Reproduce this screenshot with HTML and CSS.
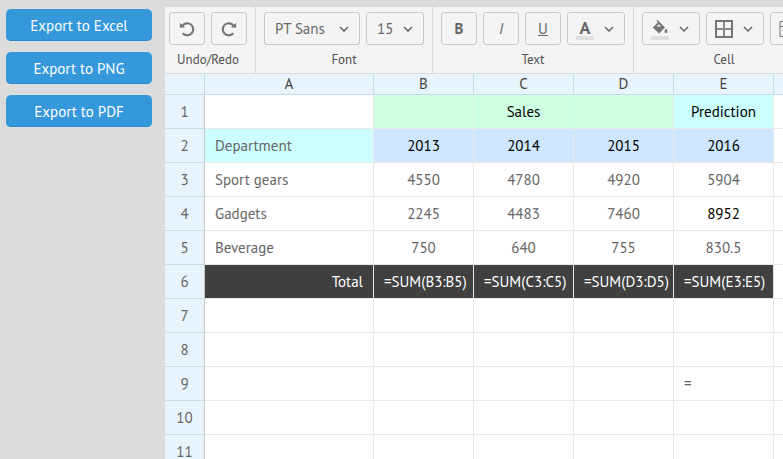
FILE: index.html
```html
<!DOCTYPE html>
<html lang="en">
  <head>
    <meta charset="utf-8" />
    <title>Spreadsheet export</title>
    <link rel="stylesheet" href="styles.css">
  </head>
  <body>
    <svg class="symbols">
      <symbol id="chevron" viewBox="0 0 10 6">
        <path d="M1 1l4 4 4-4" fill="none" stroke="#666" stroke-width="1.5" />
      </symbol>
    </svg>
    <div class="page">
      <aside class="sidebar">
        <button class="export">Export to Excel</button>
        <button class="export">Export to PNG</button>
        <button class="export">Export to PDF</button>
      </aside>
      <main class="sheet">
        <div class="toolbar">
          <div class="group">
            <div class="controls">
              <button class="tool" aria-label="Undo">
                <svg width="16" height="16" viewBox="0 0 16 16">
                  <path d="M3.500 4.600A6 6 0 1 1 3.700 12.200" fill="none" stroke="#757575" stroke-width="2.2" />
                  <path d="M.8 2v4.800l5.400-.5z" fill="#757575" />
                </svg>
              </button>
              <button class="tool" aria-label="Redo">
                <svg width="16" height="16" viewBox="0 0 16 16">
                  <path d="M12.500 4.600A6 6 0 1 0 12.300 12.200" fill="none" stroke="#757575" stroke-width="2.2" />
                  <path d="M15.200 2v4.800l-5.400-.5z" fill="#757575" />
                </svg>
              </button>
            </div>
            <div class="caption">Undo/Redo</div>
          </div>
          <div class="group">
            <div class="controls">
              <div class="picker family">
                <select aria-label="Font family">
                  <option>PT Sans</option>
                </select>
                <svg class="chevron"><use href="#chevron" /></svg>
              </div>
              <div class="picker">
                <select aria-label="Font size">
                  <option>15</option>
                </select>
                <svg class="chevron"><use href="#chevron" /></svg>
              </div>
            </div>
            <div class="caption">Font</div>
          </div>
          <div class="group">
            <div class="controls">
              <button class="tool bold">B</button>
              <button class="tool italic">I</button>
              <button class="tool underline">U</button>
              <button class="tool wide" aria-label="Text color">
                <span class="swatch letter">A</span>
                <svg class="chevron"><use href="#chevron" /></svg>
              </button>
            </div>
            <div class="caption">Text</div>
          </div>
          <div class="group">
            <div class="controls">
              <button class="tool wide" aria-label="Fill color">
                <span class="swatch">
                  <svg width="16" height="14" viewBox="0 0 16 14">
                    <path d="M5.500 0l7.500 7.500L7 13.500 .8 7.500 6 2.300 4.500.8z" fill="#757575" />
                    <path d="M4.500 6.500h4.500L6.800 4.300z" fill="#f4f4f4" />
                    <path d="M14 8.500c1 1.500 1.500 2.200 1.500 3a1.500 1.500 0 0 1-3 0c0-.8.500-1.500 1.500-3z" fill="#757575" />
                  </svg>
                </span>
                <svg class="chevron"><use href="#chevron" /></svg>
              </button>
              <button class="tool wide" aria-label="Borders">
                <svg width="18" height="18" viewBox="0 0 18 18">
                  <path d="M9 1v16M1 9h16" stroke="#8a8a8a" stroke-width="2" />
                  <path d="M1 1h16v16H1z" fill="none" stroke="#757575" stroke-width="2" />
                </svg>
                <svg class="chevron"><use href="#chevron" /></svg>
              </button>
              <button class="tool" aria-label="Merge cells">
                <svg width="18" height="16" viewBox="0 0 18 16">
                  <path d="M1 .5h16v15H1zM1 5.500h16M6 .5v5M12 .5v5M6 12v3.500M12 12v3.500" fill="none" stroke="#757575" />
                  <path d="M3 9l3-2v4zM15 9l-3-2v4z" fill="#757575" />
                </svg>
              </button>
            </div>
            <div class="caption">Cell</div>
          </div>
        </div>
        <table class="grid">
          <colgroup>
            <col class="col-index" />
            <col class="col-first" />
            <col span="5" class="col-data" />
          </colgroup>
          <thead>
            <tr><th></th><th>A</th><th>B</th><th>C</th><th>D</th><th>E</th><th></th></tr>
          </thead>
          <tbody>
            <tr>
              <th>1</th><td></td>
              <td class="merged" colspan="3">Sales</td>
              <td class="cyan center dark">Prediction</td><td></td>
            </tr>
            <tr>
              <th>2</th><td class="cyan">Department</td>
              <td class="year">2013</td><td class="year">2014</td><td class="year">2015</td><td class="year">2016</td><td></td>
            </tr>
            <tr>
              <th>3</th><td>Sport gears</td>
              <td class="center">4550</td><td class="center">4780</td><td class="center">4920</td><td class="center">5904</td><td></td>
            </tr>
            <tr>
              <th>4</th><td>Gadgets</td>
              <td class="center">2245</td><td class="center">4483</td><td class="center">7460</td><td class="center dark">8952</td><td></td>
            </tr>
            <tr>
              <th>5</th><td>Beverage</td>
              <td class="center">750</td><td class="center">640</td><td class="center">755</td><td class="center">830.5</td><td></td>
            </tr>
            <tr>
              <th>6</th><td class="total right">Total</td>
              <td class="total">=SUM(B3:B5)</td><td class="total">=SUM(C3:C5)</td><td class="total">=SUM(D3:D5)</td><td class="total">=SUM(E3:E5)</td><td></td>
            </tr>
            <tr><th>7</th><td></td><td></td><td></td><td></td><td></td><td></td></tr>
            <tr><th>8</th><td></td><td></td><td></td><td></td><td></td><td></td></tr>
            <tr><th>9</th><td></td><td></td><td></td><td></td><td>=</td><td></td></tr>
            <tr><th>10</th><td></td><td></td><td></td><td></td><td></td><td></td></tr>
            <tr><th>11</th><td></td><td></td><td></td><td></td><td></td><td></td></tr>
          </tbody>
        </table>
      </main>
    </div>
  </body>
</html>
```

FILE: styles.css
```css
* {
  box-sizing: border-box;
}
body {
  margin: 0;
  background: #dcdcdc;
  color: #666;
  font: 15px "PT Sans", Lato, sans-serif;
}
button,
select {
  font: inherit;
  color: inherit;
}
.symbols {
  display: none;
}
.page {
  display: flex;
  height: 100vh;
  overflow: hidden;
}

.sidebar {
  flex: none;
  width: 165px;
  padding: 9px 13px 0 6px;
  display: flex;
  flex-direction: column;
  gap: 11px;
}
.export {
  height: 32px;
  padding: 1px 6px 0;
  border: 0;
  border-radius: 5px;
  background: #3498db;
  box-shadow: inset 0 -1px #2a8ad2;
  color: #fff;
}

.sheet {
  flex: 1;
  min-width: 0;
  margin-top: 7px;
  overflow: hidden;
  background: #fff;
}
.toolbar {
  display: flex;
  height: 67px;
  background: #f4f4f4;
  border-bottom: 1px solid #d5dbe0;
}
.group {
  flex: none;
  padding: 5px 8px 0;
  border-right: 1px solid #d9d9d9;
}
.group:first-child {
  padding-left: 4px;
}
.controls {
  display: flex;
  gap: 6px;
}
.caption {
  margin-top: 6px;
  line-height: 18px;
  font-size: 13px;
  text-align: center;
  color: #505050;
}
.tool,
.picker {
  height: 33px;
  border: 1px solid #c9c9c9;
  border-radius: 3px;
  background: #f4f4f4;
}
.tool {
  width: 36px;
  padding: 0;
  display: flex;
  align-items: center;
  justify-content: center;
}
.wide {
  width: 58px;
  padding-right: 2px;
  gap: 10px;
}
.bold {
  font-weight: bold;
}
.italic {
  font-style: italic;
}
.underline {
  text-decoration: underline;
}
.swatch {
  display: flex;
  justify-content: center;
  width: 18px;
  height: 20px;
  margin-top: 2px;
  border-bottom: 4px solid #dde0e3;
  line-height: 16px;
}
.letter {
  font-size: 18px;
  font-weight: bold;
}
.chevron {
  width: 10px;
  height: 6px;
}
.picker {
  display: grid;
  width: 58px;
  align-items: center;
}
.picker.family {
  width: 96px;
}
.picker select,
.picker svg {
  grid-area: 1 / 1;
}
.picker select {
  appearance: none;
  width: 100%;
  height: 100%;
  padding: 0 10px;
  border: 0;
  background: none;
}
.picker svg {
  justify-self: end;
  margin-right: 10px;
  pointer-events: none;
}

.grid {
  table-layout: fixed;
  width: 709px;
  border-spacing: 0;
}
.col-index {
  width: 40px;
}
.col-first {
  width: 169px;
}
.col-data {
  width: 100px;
}
th,
td {
  height: 34px;
  padding: 0 10px;
  border: 0 solid #e9e9e9;
  border-width: 0 1px 1px 0;
  white-space: nowrap;
}
td {
  overflow: hidden;
}
th {
  padding: 0;
  background: #e8f4fb;
  border-color: #c6dcec;
  font-weight: normal;
}
thead th {
  height: 21px;
  line-height: 20px;
  color: #444;
}
tbody th {
  border-right-color: #c8c8c8;
}
.center,
.merged,
.year {
  text-align: center;
}
.right {
  text-align: right;
}
.cyan {
  background: #cff;
}
.year {
  background: #cfe6ff;
}
.dark,
.merged,
.year {
  color: #000;
}
.merged {
  /* column lines stay visible under the merged cell */
  background: repeating-linear-gradient(to right, #cfffe2 0 99px, #d8f3e4 99px 100px);
}
.total {
  background: #404040;
  color: #fff;
}
```
